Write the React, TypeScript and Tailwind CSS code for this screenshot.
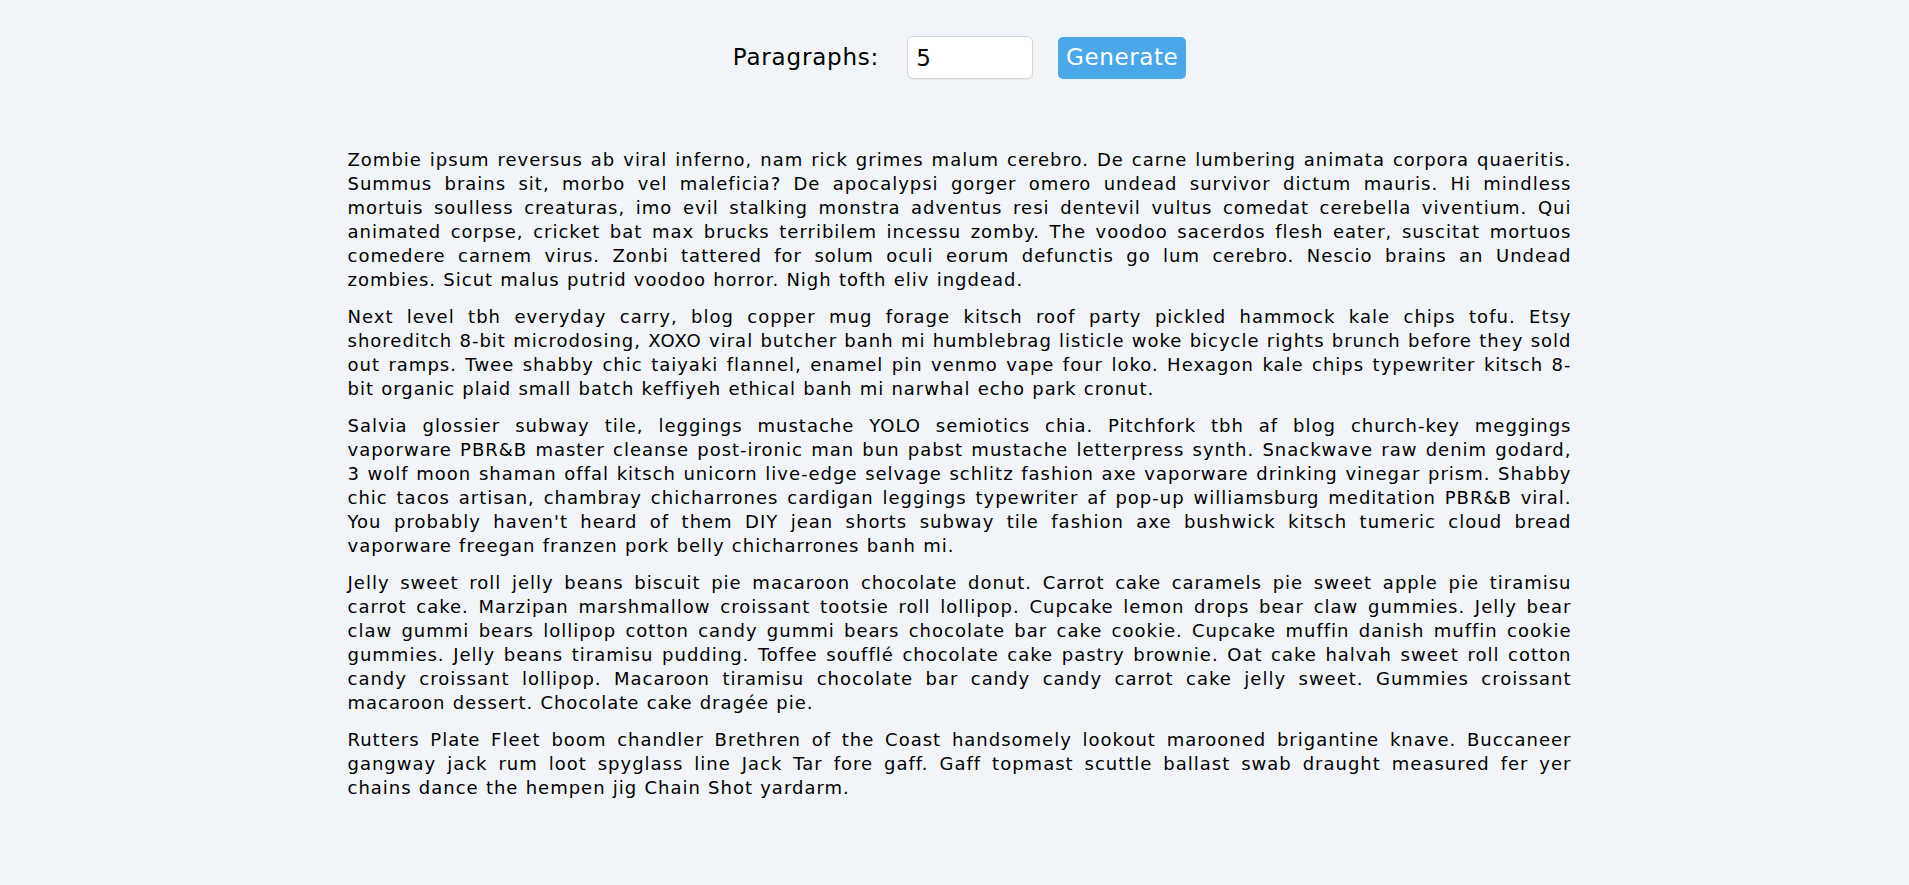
import React from "react";

const paras = [
  "Zombie ipsum reversus ab viral inferno, nam rick grimes malum cerebro. De carne lumbering animata corpora quaeritis. Summus brains sit, morbo vel maleficia? De apocalypsi gorger omero undead survivor dictum mauris. Hi mindless mortuis soulless creaturas, imo evil stalking monstra adventus resi dentevil vultus comedat cerebella viventium. Qui animated corpse, cricket bat max brucks terribilem incessu zomby. The voodoo sacerdos flesh eater, suscitat mortuos comedere carnem virus. Zonbi tattered for solum oculi eorum defunctis go lum cerebro. Nescio brains an Undead zombies. Sicut malus putrid voodoo horror. Nigh tofth eliv ingdead.",
  "Next level tbh everyday carry, blog copper mug forage kitsch roof party pickled hammock kale chips tofu. Etsy shoreditch 8-bit microdosing, XOXO viral butcher banh mi humblebrag listicle woke bicycle rights brunch before they sold out ramps. Twee shabby chic taiyaki flannel, enamel pin venmo vape four loko. Hexagon kale chips typewriter kitsch 8-bit organic plaid small batch keffiyeh ethical banh mi narwhal echo park cronut.",
  "Salvia glossier subway tile, leggings mustache YOLO semiotics chia. Pitchfork tbh af blog church-key meggings vaporware PBR&B master cleanse post-ironic man bun pabst mustache letterpress synth. Snackwave raw denim godard, 3 wolf moon shaman offal kitsch unicorn live-edge selvage schlitz fashion axe vaporware drinking vinegar prism. Shabby chic tacos artisan, chambray chicharrones cardigan leggings typewriter af pop-up williamsburg meditation PBR&B viral. You probably haven't heard of them DIY jean shorts subway tile fashion axe bushwick kitsch tumeric cloud bread vaporware freegan franzen pork belly chicharrones banh mi.",
  "Jelly sweet roll jelly beans biscuit pie macaroon chocolate donut. Carrot cake caramels pie sweet apple pie tiramisu carrot cake. Marzipan marshmallow croissant tootsie roll lollipop. Cupcake lemon drops bear claw gummies. Jelly bear claw gummi bears lollipop cotton candy gummi bears chocolate bar cake cookie. Cupcake muffin danish muffin cookie gummies. Jelly beans tiramisu pudding. Toffee soufflé chocolate cake pastry brownie. Oat cake halvah sweet roll cotton candy croissant lollipop. Macaroon tiramisu chocolate bar candy candy carrot cake jelly sweet. Gummies croissant macaroon dessert. Chocolate cake dragée pie.",
  "Rutters Plate Fleet boom chandler Brethren of the Coast handsomely lookout marooned brigantine knave. Buccaneer gangway jack rum loot spyglass line Jack Tar fore gaff. Gaff topmast scuttle ballast swab draught measured fer yer chains dance the hempen jig Chain Shot yardarm.",
];

export default function App() {
  return (
    <div
      className="min-h-[885px] w-full bg-[#f1f5f9] text-black pl-[10px]"
      style={{ fontFamily: '"DejaVu Sans", Verdana, sans-serif' }}
    >
      <div className="flex items-center justify-center pt-[36px]">
        <label className="text-[23px] leading-none tracking-[0.8px] mr-[28px]">Paragraphs:</label>
        <input
          type="number"
          defaultValue={5}
          className="w-[126px] h-[43px] bg-white border border-[#d2d6db] rounded-[6px] px-[8px] text-[23px] outline-none shadow-[0_1px_1px_rgba(0,0,0,0.06)]"
        />
        <button className="ml-[25px] w-[128px] h-[42px] bg-[#4aa8e8] text-white text-[23px] tracking-[0.6px] rounded-[5px]">
          Generate
        </button>
      </div>
      <div className="w-[1224px] mx-auto mt-[69px] pb-[40px]">
        {paras.map((p, i) => (
          <p
            key={i}
            className="text-[18px] leading-[24px] tracking-[1px] [word-spacing:0.5px] text-justify mb-[13px]"
          >
            {p}
          </p>
        ))}
      </div>
    </div>
  );
}
